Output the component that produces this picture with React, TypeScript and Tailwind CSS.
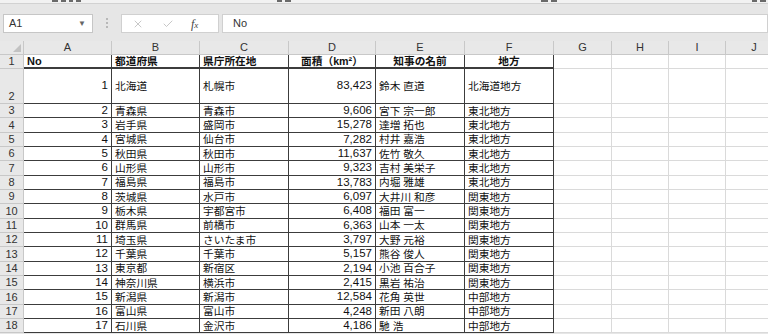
import { X, Check } from "lucide-react";

type Row = [string, string, string, string, string, string];

const rows: Row[] = [
  ["2", "青森県", "青森市", "9,606", "宮下 宗一郎", "東北地方"],
  ["3", "岩手県", "盛岡市", "15,278", "達増 拓也", "東北地方"],
  ["4", "宮城県", "仙台市", "7,282", "村井 嘉浩", "東北地方"],
  ["5", "秋田県", "秋田市", "11,637", "佐竹 敬久", "東北地方"],
  ["6", "山形県", "山形市", "9,323", "吉村 美栄子", "東北地方"],
  ["7", "福島県", "福島市", "13,783", "内堀 雅雄", "東北地方"],
  ["8", "茨城県", "水戸市", "6,097", "大井川 和彦", "関東地方"],
  ["9", "栃木県", "宇都宮市", "6,408", "福田 富一", "関東地方"],
  ["10", "群馬県", "前橋市", "6,363", "山本 一太", "関東地方"],
  ["11", "埼玉県", "さいたま市", "3,797", "大野 元裕", "関東地方"],
  ["12", "千葉県", "千葉市", "5,157", "熊谷 俊人", "関東地方"],
  ["13", "東京都", "新宿区", "2,194", "小池 百合子", "関東地方"],
  ["14", "神奈川県", "横浜市", "2,415", "黒岩 祐治", "関東地方"],
  ["15", "新潟県", "新潟市", "12,584", "花角 英世", "中部地方"],
  ["16", "富山県", "富山市", "4,248", "新田 八朗", "中部地方"],
  ["17", "石川県", "金沢市", "4,186", "馳 浩", "中部地方"],
];

const cols = ["A", "B", "C", "D", "E", "F", "G", "H", "I", "J"];

const jp = "font-['Liberation_Sans','Noto_Sans_CJK_JP',sans-serif]";
const num = "font-['Liberation_Sans',sans-serif] text-[11.5px]";
const cell = "flex items-center overflow-hidden whitespace-nowrap border-r border-b border-[#3c3c3c] bg-white text-[10.7px] text-[#111]";
const empty = "border-r border-b border-[#dadada] bg-white";
const rowHead = "flex items-end justify-center border-r border-b border-[#c8c8c8] bg-[#e8e8e8] text-[11px] text-[#333] font-['Liberation_Sans',sans-serif] leading-[14px]";

function DataRow({ n, r }: { n: number; r: Row }) {
  return (
    <>
      <div className={rowHead}>{n}</div>
      <div className={`${cell} justify-end pr-[3px] ${num}`}>{r[0]}</div>
      <div className={`${cell} pl-[3px] ${jp}`}>{r[1]}</div>
      <div className={`${cell} pl-[3px] ${jp}`}>{r[2]}</div>
      <div className={`${cell} justify-end pr-[3px] ${num}`}>{r[3]}</div>
      <div className={`${cell} pl-[3px] ${jp}`}>{r[4]}</div>
      <div className={`${cell} pl-[3px] ${jp}`}>{r[5]}</div>
      <div className={empty} />
      <div className={empty} />
      <div className={empty} />
      <div className={empty} />
    </>
  );
}

// bottoms of the ribbon group labels, cut off by the screenshot edge
function Stub({ w }: { w: number[] }) {
  return (
    <div className="flex items-start gap-[3px]">
      {w.map((x, i) => (
        <span key={i} className="h-[2px] bg-[#6a6a6a]" style={{ width: x }} />
      ))}
    </div>
  );
}

export default function App() {
  return (
    <div className="h-[334px] w-[768px] overflow-hidden bg-[#e6e6e6]">
      {/* ribbon edge */}
      <div className="flex h-[4px] items-start border-b border-[#d2d2d2] bg-[#f2f2f2] pt-0">
        <div className="ml-[52px]">
          <Stub w={[6, 5, 4, 5]} />
        </div>
        <div className="ml-[196px]">
          <Stub w={[5, 6]} />
        </div>
        <div className="ml-[250px]">
          <Stub w={[7, 6]} />
        </div>
        <div className="ml-auto mr-[2px]">
          <Stub w={[5, 6]} />
        </div>
      </div>

      {/* formula bar */}
      <div className="flex h-[37px] items-start pt-[10px]">
        <div className="ml-[3px] flex h-[19px] w-[90px] items-center justify-between border border-[#c6c6c6] bg-white pl-[5px] pr-[6px] text-[11px] text-[#333] font-['Liberation_Sans',sans-serif]">
          <span>A1</span>
          <span className="text-[8px] text-[#666]">▼</span>
        </div>
        <div className="flex w-[28px] flex-col items-center gap-[2px] pt-[4px]">
          <span className="h-[2px] w-[2px] bg-[#b8b8b8]" />
          <span className="h-[2px] w-[2px] bg-[#b8b8b8]" />
          <span className="h-[2px] w-[2px] bg-[#b8b8b8]" />
        </div>
        <div className="flex h-[19px] w-[98px] items-center border border-[#d0d0d0] bg-white">
          <X className="ml-[10px] h-[12px] w-[12px] text-[#b4b4b4]" strokeWidth={1.5} />
          <Check className="ml-[18px] h-[12px] w-[12px] text-[#b4b4b4]" strokeWidth={1.5} />
          <span className="ml-[17px] font-['Liberation_Serif',serif] text-[12px] italic text-[#444]">
            f<span className="text-[9px]">x</span>
          </span>
        </div>
        <div className="ml-[3px] flex h-[19px] flex-1 items-center border border-[#d0d0d0] bg-white pl-[10px] text-[11px] text-[#333] font-['Liberation_Sans',sans-serif]">
          No
        </div>
      </div>

      {/* sheet */}
      <div className="grid grid-cols-[24px_88px_88px_89px_87px_89px_89px_58px_57px_57px_57px] grid-rows-[14px_14px_35px_repeat(16,14.33px)]">
        <div className="relative border-r border-b border-[#c8c8c8] bg-[#e8e8e8]">
          <svg className="absolute bottom-[2px] right-[2px]" width="8" height="8" viewBox="0 0 8 8">
            <path d="M8 0 L8 8 L0 8 Z" fill="#c2c2c2" />
          </svg>
        </div>
        {cols.map((c) => (
          <div
            key={c}
            className="flex items-center justify-center border-r border-b border-[#c8c8c8] bg-[#e8e8e8] text-[11px] text-[#333] font-['Liberation_Sans',sans-serif]"
          >
            {c}
          </div>
        ))}

        {/* row 1: headings */}
        <div className={rowHead}>1</div>
        <div className={`${cell} border-b-2 bg-[#d9e1f2] pl-[3px] font-bold font-['Liberation_Sans',sans-serif] text-[11px]`}>No</div>
        <div className={`${cell} border-b-2 bg-[#d9e1f2] pl-[3px] font-bold ${jp}`}>都道府県</div>
        <div className={`${cell} border-b-2 bg-[#d9e1f2] pl-[3px] font-bold ${jp}`}>県庁所在地</div>
        <div className={`${cell} border-b-2 bg-[#d9e1f2] justify-center font-bold ${jp}`}>面積（km²）</div>
        <div className={`${cell} border-b-2 bg-[#d9e1f2] justify-center font-bold ${jp}`}>知事の名前</div>
        <div className={`${cell} border-b-2 bg-[#d9e1f2] justify-center font-bold ${jp}`}>地方</div>
        <div className={empty} />
        <div className={empty} />
        <div className={empty} />
        <div className={empty} />

        <DataRow n={2} r={["1", "北海道", "札幌市", "83,423", "鈴木 直道", "北海道地方"]} />
        {rows.map((r, i) => (
          <DataRow key={r[0]} n={i + 3} r={r} />
        ))}
      </div>
    </div>
  );
}
